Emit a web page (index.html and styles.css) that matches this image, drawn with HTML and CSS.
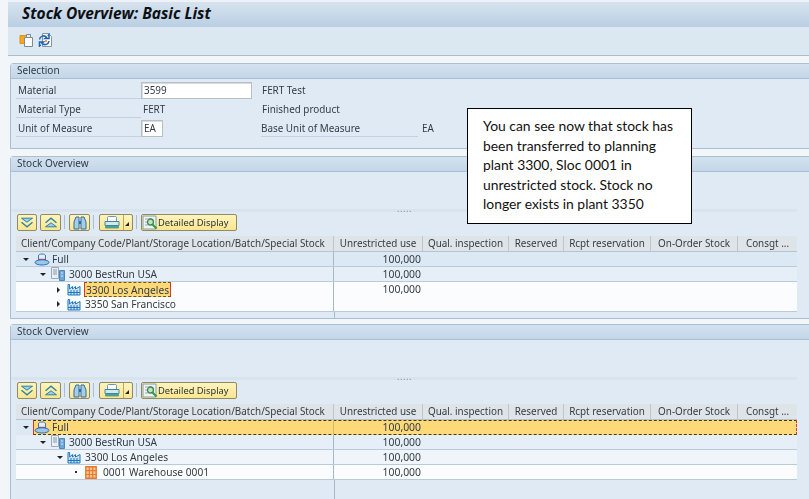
FILE: index.html
```html
<!DOCTYPE html>
<html lang="en">
<head>
<meta charset="utf-8">
<title>Stock Overview: Basic List</title>
<link rel="stylesheet" href="styles.css">
</head>
<body>
<svg class="defs" width="0" height="0" aria-hidden="true">
  <symbol id="i-hat" viewBox="0 0 16 13">
    <path d="M4.500 8V3C4.500 1.400 6 1 8 1s3.500.4 3.500 2v5z" fill="#e4ecf4" stroke="#3a78b8"/>
    <path d="M4.500 5.800h7V8h-7z" fill="#c9423c"/>
    <ellipse cx="8" cy="9.400" rx="7" ry="2.600" fill="#9cc6ea" stroke="#2f6fb5"/>
  </symbol>
  <symbol id="i-org" viewBox="0 0 16 14">
    <path d="M1.500 .5h7v11h-7z" fill="#e8eef4" stroke="#9aaaba"/>
    <path d="M3 3h4M3 5h4M3 7h4" stroke="#8a9bab"/>
    <path d="M9.500 3.500h5v10h-5z" fill="#6ea6d8" stroke="#4a87bd"/>
    <path d="M11 6h2M11 9h2" stroke="#dcebf7"/>
  </symbol>
  <symbol id="i-plant" viewBox="0 0 14 13">
    <path d="M1 1.500h1.600V6L5.500 3.500V6l3-2.500V6l4.500-2.500V12H1z" fill="#cfe3f4" stroke="#1f78c1"/>
    <path d="M1 9.500h12M4 7v5M7 7v5M10 7v5" stroke="#1f78c1"/>
  </symbol>
  <symbol id="i-wh" viewBox="0 0 12 13">
    <path d="M.8.800h10.400v11.400H.8z" fill="#f8c79a" stroke="#e8792b" stroke-width="1.400"/>
    <path d="M.8 4.700h10.400M.8 8.500h10.400M4.300 .8v11.400M7.700 .8v11.400" stroke="#e8792b" stroke-width="1.200"/>
  </symbol>
  <symbol id="i-down" viewBox="0 0 14 11">
    <path d="M1.500 1.200h11L7 5.200z" fill="#9fd0e8" stroke="#2b83a8"/>
    <path d="M1.500 5.200L7 9.800l5.500-4.600" fill="none" stroke="#2b83a8" stroke-width="1.300"/>
  </symbol>
  <symbol id="i-up" viewBox="0 0 14 11">
    <path d="M1.500 9.800h11L7 5.800z" fill="#9fd0e8" stroke="#2b83a8"/>
    <path d="M1.500 5.800L7 1.200l5.500 4.600" fill="none" stroke="#2b83a8" stroke-width="1.300"/>
  </symbol>
  <symbol id="i-find" viewBox="0 0 14 14">
    <path d="M1 13V6l2-5h3v12zM8 13V1h3l2 5v7z" fill="#a9cce8" stroke="#2d6ea5"/>
    <path d="M6 5h2v3H6z" fill="#2d6ea5"/>
  </symbol>
  <symbol id="i-print" viewBox="0 0 16 13">
    <path d="M3.500 5.500V1.500c0-.5.5-1 1-1h7c.5 0 1 .5 1 1v4" fill="#fbfcfc" stroke="#6f98ad"/>
    <path d="M1 5.500h14v4H1z" fill="#d3e7ef" stroke="#3d87a3"/>
    <path d="M1.500 10.500h13v1.500h-13z" fill="#4fb0a0" stroke="#3c9285" stroke-width=".8"/>
  </symbol>
  <symbol id="i-detail" viewBox="0 0 16 15">
    <path d="M1 1h13v13H1z" fill="#eef3f6" stroke="#8a9aa6"/>
    <path d="M3 4h7M3 7h3M3 10h3" stroke="#9aa8b2"/>
    <circle cx="8.500" cy="7" r="3" fill="#bfe3c3" stroke="#3b8a49" stroke-width="1.300"/>
    <path d="M10.500 9.500l4 4" stroke="#2f9a45" stroke-width="2"/>
  </symbol>
</svg>

<div class="tabstrip"></div>
<header class="titlebar"><h1 class="title">Stock Overview: Basic List</h1></header>
<div class="appbar">
  <svg class="app-icon" viewBox="0 0 14 14" width="14" height="14"><path d="M1 2.500h8v8H1z" fill="#f5a623" stroke="#e88f10"/><path d="M5.500 4.500h8v9h-8z" fill="#fff" stroke="#7a8a97"/><path d="M7.500 1.500h4v3h-4z" fill="#e9eef2" stroke="#7a8a97"/></svg>
  <svg class="app-icon" viewBox="0 0 14 14" width="14" height="14"><path d="M4.500.5h6l3 3v10h-9z" fill="#f7f9fb" stroke="#8494a1"/><path d="M1.500 6.500a4 4 0 0 1 7-2.200L7 5.500h4v-4L9.800 2.800" fill="none" stroke="#1f63b5" stroke-width="1.500"/><path d="M11 8a4 4 0 0 1-7 2.200L5.500 9h-4v4l1.200-1.300" fill="none" stroke="#1f63b5" stroke-width="1.500"/><path d="M7 7h2v2H7z" fill="#eda13a"/></svg>
</div>

<main class="content">
  <section class="panel selection">
    <h2 class="panel-head">Selection</h2>
    <div class="form">
      <div class="form-row">
        <span class="label">Material</span>
        <span class="input wide">3599</span>
        <span class="desc">FERT Test</span>
      </div>
      <div class="form-row">
        <span class="label">Material Type</span>
        <span class="value">FERT</span>
        <span class="desc">Finished product</span>
      </div>
      <div class="form-row">
        <span class="label">Unit of Measure</span>
        <span class="input narrow">EA</span>
        <span class="label base">Base Unit of Measure</span>
        <span class="base-value">EA</span>
      </div>
    </div>
  </section>

  <section class="panel overview first">
    <h2 class="panel-head">Stock Overview</h2>
    <div class="blank"></div>
    <div class="splitter"><span class="dots">.....</span></div>
    <div class="toolbar">
      <span class="btn b-s"><svg width="14" height="11"><use href="#i-down"/></svg></span>
      <span class="btn b-s2"><svg width="14" height="11"><use href="#i-up"/></svg></span>
      <span class="sep"></span>
      <span class="btn b-s2 b-find"><svg width="14" height="14"><use href="#i-find"/></svg></span>
      <span class="sep"></span>
      <span class="btn b-print"><svg width="16" height="13"><use href="#i-print"/></svg><i class="caret"></i></span>
      <span class="sep"></span>
      <span class="btn b-text"><svg width="16" height="15"><use href="#i-detail"/></svg>Detailed Display</span>
    </div>
    <div class="grid">
      <div class="row head">
        <span class="c tree">Client/Company Code/Plant/Storage Location/Batch/Special Stock</span>
        <span class="c n1">Unrestricted use</span><span class="c n2">Qual. inspection</span><span class="c n3">Reserved</span><span class="c n4">Rcpt reservation</span><span class="c n5">On-Order Stock</span><span class="c n6">Consgt ...</span>
      </div>
      <div class="row l1">
        <span class="c tree"><span class="node d1"><i class="tw open"></i><svg width="16" height="13"><use href="#i-hat"/></svg><span>Full</span></span></span>
        <span class="c n1 num">100,000</span>
      </div>
      <div class="row l2">
        <span class="c tree"><span class="node d2"><i class="tw open"></i><svg width="16" height="14"><use href="#i-org"/></svg><span>3000 BestRun USA</span></span></span>
        <span class="c n1 num">100,000</span>
      </div>
      <div class="row l3 noline">
        <span class="c tree"><span class="node d3"><i class="tw shut"></i><svg width="14" height="13"><use href="#i-plant"/></svg><span class="focus">3300 Los Angeles</span></span></span>
        <span class="c n1 num">100,000</span>
      </div>
      <div class="row l3">
        <span class="c tree"><span class="node d3"><i class="tw shut"></i><svg width="14" height="13"><use href="#i-plant"/></svg><span class="plain">3350 San Francisco</span></span></span>
      </div>
      <div class="grid-tail short"></div>
    </div>
  </section>

  <section class="panel overview second">
    <h2 class="panel-head">Stock Overview</h2>
    <div class="blank"></div>
    <div class="splitter"><span class="dots">.....</span></div>
    <div class="toolbar">
      <span class="btn b-s"><svg width="14" height="11"><use href="#i-down"/></svg></span>
      <span class="btn b-s2"><svg width="14" height="11"><use href="#i-up"/></svg></span>
      <span class="sep"></span>
      <span class="btn b-s2 b-find"><svg width="14" height="14"><use href="#i-find"/></svg></span>
      <span class="sep"></span>
      <span class="btn b-print"><svg width="16" height="13"><use href="#i-print"/></svg><i class="caret"></i></span>
      <span class="sep"></span>
      <span class="btn b-text"><svg width="16" height="15"><use href="#i-detail"/></svg>Detailed Display</span>
    </div>
    <div class="grid">
      <div class="row head">
        <span class="c tree">Client/Company Code/Plant/Storage Location/Batch/Special Stock</span>
        <span class="c n1">Unrestricted use</span><span class="c n2">Qual. inspection</span><span class="c n3">Reserved</span><span class="c n4">Rcpt reservation</span><span class="c n5">On-Order Stock</span><span class="c n6">Consgt ...</span>
      </div>
      <div class="row selected">
        <span class="c tree"><span class="node d1"><i class="tw open"></i><svg width="16" height="13"><use href="#i-hat"/></svg><span>Full</span></span></span>
        <span class="c n1 num">100,000</span>
      </div>
      <div class="row l2">
        <span class="c tree"><span class="node d2"><i class="tw open"></i><svg width="16" height="14"><use href="#i-org"/></svg><span>3000 BestRun USA</span></span></span>
        <span class="c n1 num">100,000</span>
      </div>
      <div class="row l3a">
        <span class="c tree"><span class="node d3"><i class="tw open"></i><svg width="14" height="13"><use href="#i-plant"/></svg><span class="plain">3300 Los Angeles</span></span></span>
        <span class="c n1 num">100,000</span>
      </div>
      <div class="row l3">
        <span class="c tree"><span class="node d4"><i class="tw leaf"></i><svg width="12" height="13"><use href="#i-wh"/></svg><span class="leaf-text">0001 Warehouse 0001</span></span></span>
        <span class="c n1 num">100,000</span>
      </div>
      <div class="grid-tail tall"></div>
    </div>
  </section>
</main>

<aside class="callout">You can see now that stock has been transferred to planning plant 3300, Sloc 0001 in unrestricted stock. Stock no longer exists in plant 3350</aside>
</body>
</html>
```
FILE: styles.css
```css
* { box-sizing: border-box; }
html, body { margin: 0; padding: 0; }
body {
  width: 809px;
  height: 499px;
  overflow: hidden;
  position: relative;
  background: #f3f6f9;
  font-family: "Noto Sans", "Liberation Sans", sans-serif;
  font-size: 9.900px;
  color: #333c44;
}
.defs { position: absolute; }
.tabstrip { height: 2px; margin-left: 8px; background: #eef2f6; }
.titlebar {
  height: 25px;
  margin-left: 8px;
  padding: 1px 0 0 14px;
  background: linear-gradient(#d7e3ef, #b9cfe3);
}
.title {
  margin: 0;
  font: italic bold 15.500px/20px "Open Sans", "Liberation Sans", sans-serif;
  color: #0d1013;
}
.appbar {
  height: 29px;
  margin-left: 8px;
  padding: 6px 0 0 11px;
  display: flex;
  gap: 5px;
  align-items: flex-start;
  background: #dbe7f1;
  border-bottom: 1px solid #a9bdcf;
}
.content {
  margin-left: 10px;
  padding-top: 7px;
  display: flex;
  flex-direction: column;
  filter: blur(.3px);
}
.panel {
  border: 1px solid #a8c0d6;
  border-right: 0;
  border-radius: 4px 0 0 0;
  background: #dfeaf4;
}
.panel-head {
  margin: 0;
  height: 15px;
  padding-left: 6px;
  font-size: 10px;
  font-weight: 400;
  line-height: 12px;
  color: #2f3c48;
  background: linear-gradient(#d4e2ef, #c3d6e8);
  border-bottom: 1px solid #a8c0d6;
}
.selection { height: 86px; }
.overview.first { height: 163px; margin-top: 7px; }
.overview.second { margin-top: 5px; height: 176px; }
.form { padding: 2px 0 0 5px; display: flex; flex-direction: column; }
.form-row { height: 19px; display: flex; align-items: center; }
.label {
  width: 125px;
  height: 18px;
  padding-left: 2px;
  line-height: 18px;
  align-self: flex-start;
  border-bottom: 1px solid #c3d2e0;
}
.value { width: 121px; padding: 0 0 2px 2px; }
.desc { padding-bottom: 2px; }
.input {
  height: 17px;
  line-height: 15px;
  padding-left: 2px;
  background: #fff;
  border: 1px solid #b6bec6;
  box-shadow: inset 1px 1px 0 #d7dce0;
}
.wide { width: 111px; margin-right: 10px; }
.narrow { width: 22px; margin-right: 98px; }
.label.base { width: 157px; padding-left: 0; }
.base-value { padding: 0 0 2px 4px; }
.blank { height: 37px; }
.splitter {
  height: 3px;
  margin: 0 12px 0 0;
  background: #d8e3ed;
  position: relative;
}
.dots {
  position: absolute;
  left: 386px;
  top: -6px;
  font-size: 9px;
  line-height: 12px;
  color: #7c8a97;
  letter-spacing: .6px;
}
.toolbar {
  height: 24px;
  padding: 2px 0 0 6px;
  display: flex;
  align-items: flex-start;
}
.btn {
  height: 17px;
  display: flex;
  align-items: center;
  justify-content: center;
  background: linear-gradient(#fff4bd, #fbe68f);
  border: 1px solid #8f8a60;
  border-radius: 2px;
  color: #27323c;
}
.b-s { width: 20px; }
.b-s2 { width: 21px; margin-left: 3px; }
.b-find { margin-left: 0; }
.b-print { width: 34px; margin-left: 1px; justify-content: flex-start; padding-left: 4px; position: relative; }
.b-print::after {
  content: "";
  position: absolute;
  left: 23px;
  top: 0;
  bottom: 0;
  width: 1px;
  background: #b5ab70;
}
.caret {
  position: absolute;
  right: 3px;
  bottom: 4px;
  border-left: 4px solid transparent;
  border-bottom: 4px solid #222;
}
.b-text { width: 96px; justify-content: flex-start; padding-left: 0; font-size: 9.300px; }
.sep { width: 1px; height: 14px; margin: 1px 4px 0 3px; background: #aebccb; }
.grid { margin-right: 12px; margin-left: 5px; }
.row {
  position: relative;
  height: 15px;
  display: flex;
  align-items: stretch;
  border-bottom: 1px solid #b9cbdb;
  font-size: 10.200px;
  line-height: 15px;
  white-space: nowrap;
}
.row.noline { border-bottom: 0; }
.c { display: block; flex: none; position: relative; }
.tree { width: 318px; border-right: 1px solid #a9b8c6; }
.n1 { width: 89px; }
.n2 { width: 86px; }
.n3 { width: 55px; }
.n4 { width: 87px; }
.n5 { width: 87px; }
.n6 { width: 59px; }
.head { height: 16px; font-size: 9.900px; background: #dfe4e8; border-bottom: 1px solid #b7c2cc; }
.head .c { text-align: center; border-right: 1px solid #bcc6cf; }
.head .tree { text-align: left; padding-left: 5px; }
.head .n6 { border-right: 0; }
.num { text-align: right; padding-right: 1px; width: 88px; font-size: 10.400px; }
.l1 { background: #dce8f3; }
.l2 { background: #e6eff7; }
.l3a { background: #eff5fa; }
.l3 { background: #fafcfe; }
.selected { background: #dce8f3; border-bottom: 0; }
.selected::before {
  content: "";
  position: absolute;
  left: 17px;
  right: 0;
  top: 0;
  bottom: 0;
  background: #fdd97a;
  border-top: 1px dashed #443a10;
  border-bottom: 1px dashed #443a10;
  border-left: 1px solid #d8382a;
  border-right: 1px dashed #d8382a;
}
.selected .tree { border-right-color: #d2bb6c; }
.node { display: flex; align-items: flex-start; gap: 3px; height: 100%; }
.node svg { align-self: center; }
.tw { align-self: center; }
.d1 { padding-left: 7px; }
.d1 svg { margin: 0 -1px 0 1px; }
.d2 { padding-left: 24px; }
.d3 { padding-left: 41px; }
.d3 .plain { margin-left: 1px; }
.d4 { padding-left: 59px; }
.leaf-text { margin-left: 3px; }
.tw { display: block; flex: none; }
.tw.open { height: 0; width: 6px; margin-right: 1px; border-left: 3px solid transparent; border-right: 3px solid transparent; border-top: 3px solid #222; }
.tw.shut { height: 0; width: 0; margin-right: 4px; border-top: 3px solid transparent; border-bottom: 3px solid transparent; border-left: 3px solid #222; }
.tw.leaf { width: 2px; height: 2px; margin-right: 5px; background: #333; }
.focus {
  align-self: stretch;
  line-height: 14px;
  background: #fdd97a;
  border-top: 1px dashed #6b5a14;
  border-bottom: 1px dashed #6b5a14;
  border-left: 1px solid #d8382a;
  border-right: 1px solid #d8382a;
  padding: 0 1px;
}
.grid-tail { width: 319px; border-right: 1px solid #a9b8c6; }
.grid-tail.short { height: 6px; }
.grid-tail.tall { height: 19px; }
.callout {
  position: absolute;
  left: 467px;
  top: 108px;
  width: 225px;
  height: 116px;
  padding: 7px 15px 0 15px;
  background: #fff;
  border: 1px solid #000;
  font: 13.900px/19.600px Lato, "Open Sans", sans-serif;
  color: #111;
}
```
